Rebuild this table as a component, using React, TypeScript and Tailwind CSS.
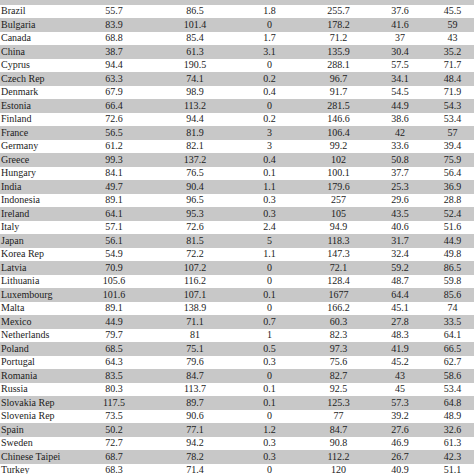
const rows: string[][] = [
  ["Brazil", "55.7", "86.5", "1.8", "255.7", "37.6", "45.5"],
  ["Bulgaria", "83.9", "101.4", "0", "178.2", "41.6", "59"],
  ["Canada", "68.8", "85.4", "1.7", "71.2", "37", "43"],
  ["China", "38.7", "61.3", "3.1", "135.9", "30.4", "35.2"],
  ["Cyprus", "94.4", "190.5", "0", "288.1", "57.5", "71.7"],
  ["Czech Rep", "63.3", "74.1", "0.2", "96.7", "34.1", "48.4"],
  ["Denmark", "67.9", "98.9", "0.4", "91.7", "54.5", "71.9"],
  ["Estonia", "66.4", "113.2", "0", "281.5", "44.9", "54.3"],
  ["Finland", "72.6", "94.4", "0.2", "146.6", "38.6", "53.4"],
  ["France", "56.5", "81.9", "3", "106.4", "42", "57"],
  ["Germany", "61.2", "82.1", "3", "99.2", "33.6", "39.4"],
  ["Greece", "99.3", "137.2", "0.4", "102", "50.8", "75.9"],
  ["Hungary", "84.1", "76.5", "0.1", "100.1", "37.7", "56.4"],
  ["India", "49.7", "90.4", "1.1", "179.6", "25.3", "36.9"],
  ["Indonesia", "89.1", "96.5", "0.3", "257", "29.6", "28.8"],
  ["Ireland", "64.1", "95.3", "0.3", "105", "43.5", "52.4"],
  ["Italy", "57.1", "72.6", "2.4", "94.9", "40.6", "51.6"],
  ["Japan", "56.1", "81.5", "5", "118.3", "31.7", "44.9"],
  ["Korea Rep", "54.9", "72.2", "1.1", "147.3", "32.4", "49.8"],
  ["Latvia", "70.9", "107.2", "0", "72.1", "59.2", "86.5"],
  ["Lithuania", "105.6", "116.2", "0", "128.4", "48.7", "59.8"],
  ["Luxembourg", "101.6", "107.1", "0.1", "1677", "64.4", "85.6"],
  ["Malta", "89.1", "138.9", "0", "166.2", "45.1", "74"],
  ["Mexico", "44.9", "71.1", "0.7", "60.3", "27.8", "33.5"],
  ["Netherlands", "79.7", "81", "1", "82.3", "48.3", "64.1"],
  ["Poland", "68.5", "75.1", "0.5", "97.3", "41.9", "66.5"],
  ["Portugal", "64.3", "79.6", "0.3", "75.6", "45.2", "62.7"],
  ["Romania", "83.5", "84.7", "0", "82.7", "43", "58.6"],
  ["Russia", "80.3", "113.7", "0.1", "92.5", "45", "53.4"],
  ["Slovakia Rep", "117.5", "89.7", "0.1", "125.3", "57.3", "64.8"],
  ["Slovenia Rep", "73.5", "90.6", "0", "77", "39.2", "48.9"],
  ["Spain", "50.2", "77.1", "1.2", "84.7", "27.6", "32.6"],
  ["Sweden", "72.7", "94.2", "0.3", "90.8", "46.9", "61.3"],
  ["Chinese Taipei", "68.7", "78.2", "0.3", "112.2", "26.7", "42.3"],
  ["Turkey", "68.3", "71.4", "0", "120", "40.9", "51.1"],
];

export default function App() {
  return (
    <div
      className="w-[474px] h-[474px] overflow-hidden bg-white text-[#1c1c1c] text-[10px] leading-none"
      style={{ fontFamily: '"Liberation Serif", "Times New Roman", serif' }}
    >
      {/* cut-off header row */}
      <div className="h-[4.5px] bg-[#c8c8c8]" />
      {rows.map((r, i) => (
        <div
          key={r[0]}
          className={`grid grid-cols-[72px_84px_78px_71px_67px_56px_49px] h-[13.5px] items-center ${
            i % 2 === 1 ? "bg-[#c8c8c8]" : "bg-white"
          }`}
        >
          <div className="pl-[1px] whitespace-nowrap">{r[0]}</div>
          {r.slice(1).map((v, j) => (
            <div key={j} className="text-center">
              {v}
            </div>
          ))}
        </div>
      ))}
    </div>
  );
}
